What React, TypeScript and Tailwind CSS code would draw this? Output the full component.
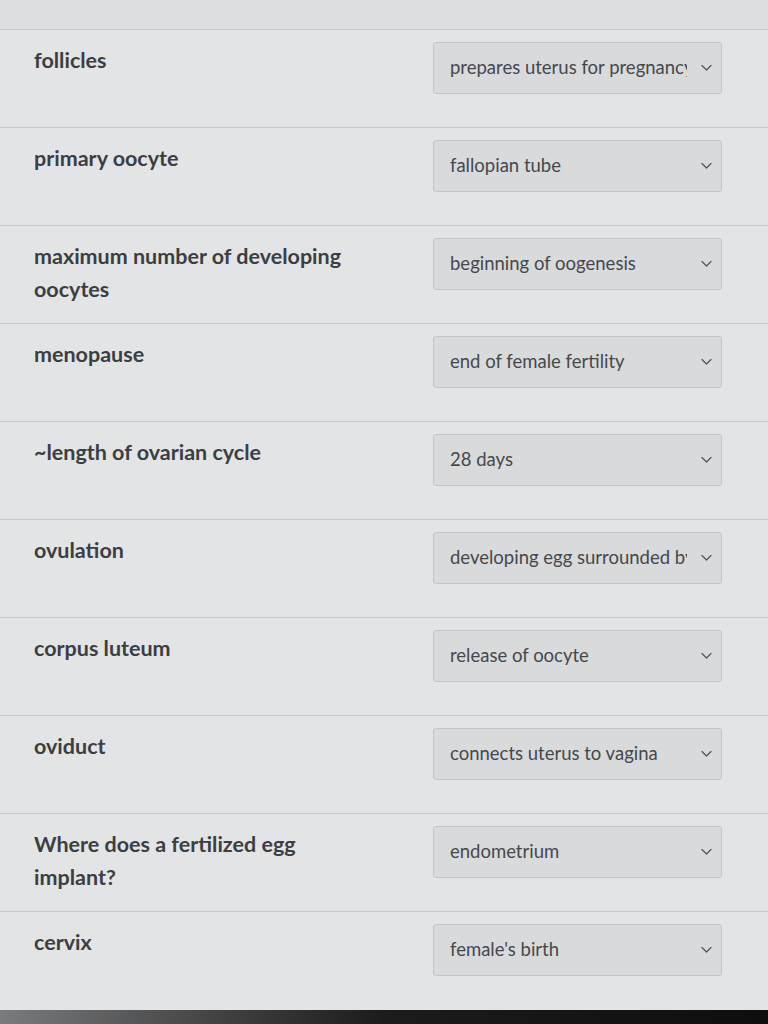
/**
 * Matching quiz — each term on the left, a dropdown answer on the right.
 */
const rows: { term: string; answer: string }[] = [
  { term: 'follicles', answer: 'prepares uterus for pregnancy' },
  { term: 'primary oocyte', answer: 'fallopian tube' },
  { term: 'maximum number of developing oocytes', answer: 'beginning of oogenesis' },
  { term: 'menopause', answer: 'end of female fertility' },
  { term: '~length of ovarian cycle', answer: '28 days' },
  { term: 'ovulation', answer: 'developing egg surrounded by' },
  { term: 'corpus luteum', answer: 'release of oocyte' },
  { term: 'oviduct', answer: 'connects uterus to vagina' },
  { term: 'Where does a fertilized egg implant?', answer: 'endometrium' },
  { term: 'cervix', answer: "female's birth" },
]

function Chevron() {
  return (
    <svg width="11" height="7" viewBox="0 0 11 7" fill="none" className="absolute right-[9px] top-1/2 -translate-y-1/2">
      <path d="M1 1l4.5 4.5L10 1" stroke="#55585b" strokeWidth="1.3" strokeLinecap="round" strokeLinejoin="round" />
    </svg>
  )
}

export default function App() {
  return (
    <div
      className="w-[768px] h-[1024px] overflow-hidden bg-[#e3e4e5] flex flex-col"
      style={{ fontFamily: 'Lato, "Open Sans", sans-serif' }}
    >
      <div className="h-[29px] bg-[#dddedf] flex-shrink-0" />
      <ul className="flex-1">
        {rows.map(r => (
          <li key={r.term} className="h-[98px] border-t border-[#c9cacb] flex items-start">
            <div className="w-[433px] flex-shrink-0 pl-[34px] pr-[70px] pt-[14px] text-[21.5px] leading-[33px] font-bold text-[#3b3e42]">
              {r.term}
            </div>
            <div className="relative mt-[12px] w-[289px] h-[52px] rounded-[3px] border border-[#c4c5c7] bg-[#d9dadc] flex items-center pl-[16px] pr-[34px]">
              <span className="block overflow-hidden whitespace-nowrap text-[18.5px] text-[#45484c]">{r.answer}</span>
              <Chevron />
            </div>
          </li>
        ))}
      </ul>
      <div className="h-[14px] bg-gradient-to-r from-[#7a7b7c] via-[#1c1c1d] to-[#0e0e0f] flex-shrink-0" />
    </div>
  )
}
